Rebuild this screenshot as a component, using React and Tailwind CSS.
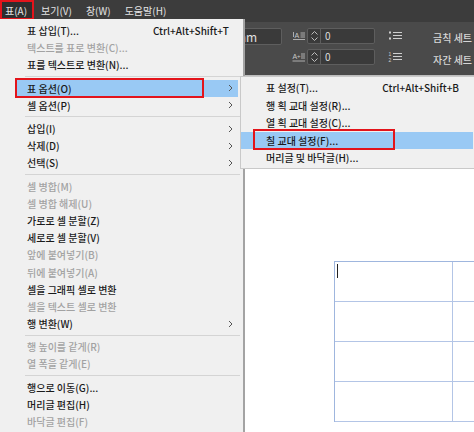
import React from "react";

const mainItems = [
  { t: "표 삽입(T)...", sc: "Ctrl+Alt+Shift+T" },
  { t: "텍스트를 표로 변환(C)...", d: true },
  { t: "표를 텍스트로 변환(N)..." },
  { sep: true },
  { t: "표 옵션(O)", arrow: true, hl: true },
  { t: "셀 옵션(P)", arrow: true },
  { sep: true },
  { t: "삽입(I)", arrow: true },
  { t: "삭제(D)", arrow: true },
  { t: "선택(S)", arrow: true },
  { sep: true },
  { t: "셀 병합(M)", d: true },
  { t: "셀 병합 해제(U)", d: true },
  { t: "가로로 셀 분할(Z)" },
  { t: "세로로 셀 분할(V)" },
  { t: "앞에 붙여넣기(B)", d: true },
  { t: "뒤에 붙여넣기(A)", d: true },
  { t: "셀을 그래픽 셀로 변환" },
  { t: "셀을 텍스트 셀로 변환", d: true },
  { t: "행 변환(W)", arrow: true },
  { sep: true },
  { t: "행 높이를 같게(R)", d: true },
  { t: "열 폭을 같게(E)", d: true },
  { sep: true },
  { t: "행으로 이동(G)..." },
  { t: "머리글 편집(H)" },
  { t: "바닥글 편집(F)", d: true },
];

const subItems = [
  { t: "표 설정(T)...", sc: "Ctrl+Alt+Shift+B" },
  { t: "행 획 교대 설정(R)..." },
  { t: "열 획 교대 설정(C)..." },
  { t: "칠 교대 설정(F)...", hl: true },
  { t: "머리글 및 바닥글(H)..." },
];

function Chevron() {
  return (
    <svg width="5" height="8" viewBox="0 0 5 8" className="shrink-0">
      <polyline points="1,1 4,4 1,7" fill="none" stroke="#555" strokeWidth="1" />
    </svg>
  );
}

function SpinArrows() {
  return (
    <div className="flex h-full w-[13px] flex-col items-center justify-center gap-[2px] border-r border-[#5e5e5e]">
      <svg width="7" height="4" viewBox="0 0 7 4">
        <polyline points="0.5,3.5 3.5,0.5 6.5,3.5" fill="none" stroke="#bdbdbd" strokeWidth="1" />
      </svg>
      <svg width="7" height="4" viewBox="0 0 7 4">
        <polyline points="0.5,0.5 3.5,3.5 6.5,0.5" fill="none" stroke="#bdbdbd" strokeWidth="1" />
      </svg>
    </div>
  );
}

function Spinner() {
  return (
    <div className="flex h-[16px] w-[68px] items-center rounded-[2px] border border-[#5e5e5e] bg-[#3a3a3a]">
      <SpinArrows />
      <span className="pl-[4px] text-[10px] leading-none text-[#dcdcdc]">0</span>
    </div>
  );
}

function LeadIcon() {
  return (
    <svg width="14" height="12" viewBox="0 0 14 12">
      <line x1="1.5" y1="2" x2="1.5" y2="7" stroke="#c8c8c8" strokeWidth="0.8" />
      <text x="2.5" y="7.5" fontSize="7" fill="#c8c8c8" fontFamily="Liberation Sans, sans-serif">A</text>
      <line x1="8.5" y1="3" x2="13" y2="3" stroke="#c8c8c8" strokeWidth="0.8" />
      <line x1="8.5" y1="5" x2="13" y2="5" stroke="#c8c8c8" strokeWidth="0.8" />
      <line x1="8.5" y1="7" x2="13" y2="7" stroke="#c8c8c8" strokeWidth="0.8" />
      <line x1="1" y1="9.5" x2="13" y2="9.5" stroke="#c8c8c8" strokeWidth="0.8" />
    </svg>
  );
}

function TrackIcon() {
  return (
    <svg width="14" height="12" viewBox="0 0 14 12">
      <text x="0.5" y="7.5" fontSize="7" fill="#c8c8c8" fontFamily="Liberation Sans, sans-serif">A</text>
      <text x="5" y="7" fontSize="6" fill="#c8c8c8" fontFamily="Liberation Sans, sans-serif">+</text>
      <line x1="9" y1="3" x2="13" y2="3" stroke="#c8c8c8" strokeWidth="0.8" />
      <line x1="9" y1="5" x2="13" y2="5" stroke="#c8c8c8" strokeWidth="0.8" />
      <line x1="9" y1="7" x2="13" y2="7" stroke="#c8c8c8" strokeWidth="0.8" />
      <line x1="0.5" y1="10" x2="13" y2="10" stroke="#c8c8c8" strokeWidth="0.8" />
    </svg>
  );
}

function BulletIcon() {
  return (
    <svg width="15" height="12" viewBox="0 0 15 12">
      <rect x="1" y="1.5" width="2" height="2" fill="#cfcfcf" />
      <rect x="1" y="7.5" width="2" height="2" fill="#cfcfcf" />
      <line x1="5" y1="2.5" x2="14" y2="2.5" stroke="#cfcfcf" strokeWidth="1" />
      <line x1="5" y1="5.5" x2="14" y2="5.5" stroke="#cfcfcf" strokeWidth="1" />
      <line x1="5" y1="8.5" x2="14" y2="8.5" stroke="#cfcfcf" strokeWidth="1" />
    </svg>
  );
}

function NumberIcon() {
  return (
    <svg width="15" height="12" viewBox="0 0 15 12">
      <text x="0.5" y="5" fontSize="5" fill="#cfcfcf" fontFamily="Liberation Sans, sans-serif">1</text>
      <text x="0.5" y="11" fontSize="5" fill="#cfcfcf" fontFamily="Liberation Sans, sans-serif">2</text>
      <line x1="5" y1="2.5" x2="14" y2="2.5" stroke="#cfcfcf" strokeWidth="1" />
      <line x1="5" y1="5.5" x2="14" y2="5.5" stroke="#cfcfcf" strokeWidth="1" />
      <line x1="5" y1="8.5" x2="14" y2="8.5" stroke="#cfcfcf" strokeWidth="1" />
    </svg>
  );
}

export default function App() {
  return (
    <div className="relative flex h-[432px] w-[474px] flex-col overflow-hidden bg-white font-['Noto_Sans_CJK_KR','Noto_Sans',sans-serif] text-[10px]">
      {/* Menu bar */}
      <div className="flex h-[22px] shrink-0 items-start bg-[#3c3c3c] text-[10px] text-[#e4e4e4]">
        <div className="flex h-[20px] w-[34px] items-center border-2 border-[#e3141b] bg-[#2e2e2e] pl-[3px]">표(A)</div>
        <div className="flex h-[20px] items-center pl-[7px]">보기(V)</div>
        <div className="flex h-[20px] items-center pl-[14px]">창(W)</div>
        <div className="flex h-[20px] items-center pl-[14px]">도움말(H)</div>
      </div>

      {/* Control panel */}
      <div className="flex h-[54px] shrink-0 items-start border-b border-[#bdbdbd] bg-[#4a4a4a] pl-[226px] pt-[6px]">
        <div className="flex h-[17px] w-[56px] items-center rounded-[2px] border border-[#5e5e5e] bg-[#3a3a3a] pl-[8px] text-[12px] leading-none text-[#e0e0e0]">
          mm
        </div>
        <div className="ml-[10px] flex flex-col gap-[5px]">
          <div className="flex h-[16px] items-center"><LeadIcon /></div>
          <div className="flex h-[16px] items-center"><TrackIcon /></div>
        </div>
        <div className="ml-[1px] flex flex-col gap-[5px]">
          <Spinner />
          <Spinner />
        </div>
        <div className="ml-[13px] flex flex-col gap-[5px]">
          <div className="flex h-[16px] items-center"><BulletIcon /></div>
          <div className="flex h-[16px] items-center"><NumberIcon /></div>
        </div>
        <div className="ml-[30px] flex flex-col gap-[4px] whitespace-nowrap font-medium text-[#d6d6d6]">
          <div className="flex h-[18px] items-center">금칙 세트</div>
          <div className="flex h-[18px] items-center">자간 세트</div>
        </div>
      </div>

      {/* Document */}
      <div className="flex-1 bg-white pl-[334px] pt-[185px]">
        <div className="flex w-[300px] flex-col border-l border-t border-[#9fb6de]">
          {Array.from({ length: 4 }).map((_, r) => (
            <div key={r} className="flex h-[40px] shrink-0 border-b border-[#b3c5e6]">
              <div className="h-full w-[118px] shrink-0 border-r border-[#b3c5e6] pl-[2px] pt-[2px]">
                {r === 0 && <div className="h-[14px] w-[1px] bg-[#222]" />}
              </div>
              <div className="h-full w-[182px] shrink-0" />
            </div>
          ))}
        </div>
      </div>

      {/* Main dropdown menu */}
      <div className="absolute bottom-0 left-0 top-[19px] w-[245px] border-r-2 border-[#a3a3a3] bg-[#f0f0f0] pt-[3px]">
        {mainItems.map((it, i) =>
          it.sep ? (
            <div key={i} className="flex h-[6px] items-center pl-[25px] pr-[3px]">
              <div className="h-[1px] w-full bg-[#d4d4d4]" />
            </div>
          ) : (
            <div
              key={i}
              className={
                "relative ml-[16px] mr-[5px] flex h-[17.2px] items-center justify-between whitespace-nowrap pl-[11px] pr-[5px] font-medium " +
                (it.hl ? "bg-[#99c9f4] " : "") +
                (it.d ? "text-[#a2a2a2]" : "text-[#1a1a1a]")
              }
            >
              <span>{it.t}</span>
              {it.sc && <span className="pr-[4px] text-[#1a1a1a]">{it.sc}</span>}
              {it.arrow && <Chevron />}
              {it.hl && (
                <div className="pointer-events-none absolute -left-[1px] -top-[1.5px] h-[20px] w-[189px] border-2 border-[#e3141b]" />
              )}
            </div>
          )
        )}
      </div>

      {/* Submenu */}
      <div className="absolute left-[240px] top-[76px] w-[240px] border border-[#c9c9c9] bg-[#f0f0f0] pb-[1px] pt-[2px]">
        {subItems.map((it, i) => (
          <div
            key={i}
            className={
              "relative mr-[6px] flex h-[17.5px] items-center justify-between whitespace-nowrap pl-[25px] pr-[14px] font-medium text-[#1a1a1a] " +
              (it.hl ? "bg-[#99c9f4]" : "")
            }
          >
            <span>{it.t}</span>
            {it.sc && <span>{it.sc}</span>}
            {it.hl && (
              <div className="pointer-events-none absolute -top-[3px] left-[12px] h-[21px] w-[142px] border-2 border-[#e3141b]" />
            )}
          </div>
        ))}
      </div>
    </div>
  );
}
